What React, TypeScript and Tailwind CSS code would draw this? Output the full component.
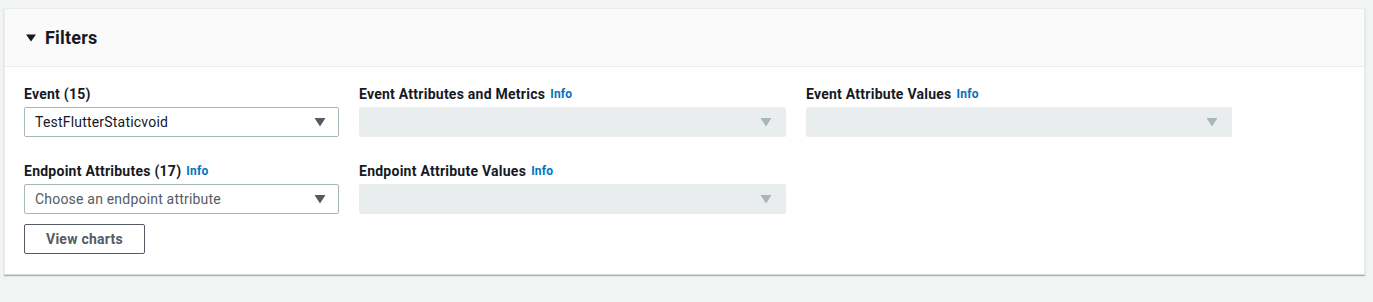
const FONT = { fontFamily: "Roboto, 'Noto Sans', Arial, sans-serif" };

function Caret({ disabled }: { disabled?: boolean }) {
  return (
    <svg width="12" height="10" viewBox="0 0 12 10" className="shrink-0">
      <path d="M0.5 1 H11.5 L6 9.5 Z" fill={disabled ? "#aab7b8" : "#545b64"} />
    </svg>
  );
}

function Label({ text, info }: { text: string; info?: boolean }) {
  return (
    <div className="mb-[2px] flex h-[22px] items-center gap-[5px]">
      <span className="text-[14px] font-bold leading-[22px] tracking-[0.25px] text-[#16191f]">
        {text}
      </span>
      {info && (
        <span className="text-[12px] font-bold leading-[22px] tracking-[0.2px] text-[#0073bb]">
          Info
        </span>
      )}
    </div>
  );
}

function Select({
  value,
  placeholder,
  disabled,
  width,
}: {
  value?: string;
  placeholder?: string;
  disabled?: boolean;
  width: string;
}) {
  if (disabled) {
    return (
      <div
        className={`flex h-[30px] items-center justify-end rounded-[2px] bg-[#eaeded] pr-[14px] ${width}`}
      >
        <Caret disabled />
      </div>
    );
  }
  return (
    <div
      className={`flex h-[30px] items-center justify-between rounded-[2px] border border-[#aab7b8] bg-white pl-[10px] pr-[12px] ${width}`}
    >
      <span
        className={`text-[14px] leading-[22px] tracking-[0.2px] ${value ? "text-[#16191f]" : "text-[#545b64]"}`}
      >
        {value ?? placeholder}
      </span>
      <Caret />
    </div>
  );
}

export default function App() {
  return (
    <div className="min-h-[302px] bg-[#f2f3f3] pl-[4px] pr-[8px] pt-[8px]" style={FONT}>
      <div className="border border-[#eaeded] border-b-[#d5dbdb] bg-white shadow-[0_1px_1px_0_rgba(0,28,36,0.3)]">
        {/* header */}
        <div className="flex h-[58px] items-center gap-[9px] border-b border-[#eaeded] bg-[#fafafa] pl-[21px]">
          <svg width="10" height="8" viewBox="0 0 10 8">
            <path d="M0 0.5 H10 L5 7.5 Z" fill="#16191f" />
          </svg>
          <span className="text-[18px] font-bold leading-[22px] tracking-[0.2px] text-[#16191f]">
            Filters
          </span>
        </div>

        {/* body */}
        <div className="px-[19px] pb-[20px] pt-[16px]">
          <div className="flex gap-[20px]">
            <div>
              <Label text="Event (15)" />
              <Select value="TestFlutterStaticvoid" width="w-[315px]" />
            </div>
            <div>
              <Label text="Event Attributes and Metrics" info />
              <Select disabled width="w-[427px]" />
            </div>
            <div>
              <Label text="Event Attribute Values" info />
              <Select disabled width="w-[426px]" />
            </div>
          </div>

          <div className="mt-[23px] flex gap-[20px]">
            <div>
              <Label text="Endpoint Attributes (17)" info />
              <Select placeholder="Choose an endpoint attribute" width="w-[315px]" />
            </div>
            <div>
              <Label text="Endpoint Attribute Values" info />
              <Select disabled width="w-[427px]" />
            </div>
          </div>

          <button className="mt-[10px] flex h-[30px] w-[121px] items-center justify-center rounded-[2px] border border-[#545b64] bg-white text-[14px] font-bold tracking-[0.25px] text-[#545b64]">
            View charts
          </button>
        </div>
      </div>
    </div>
  );
}
